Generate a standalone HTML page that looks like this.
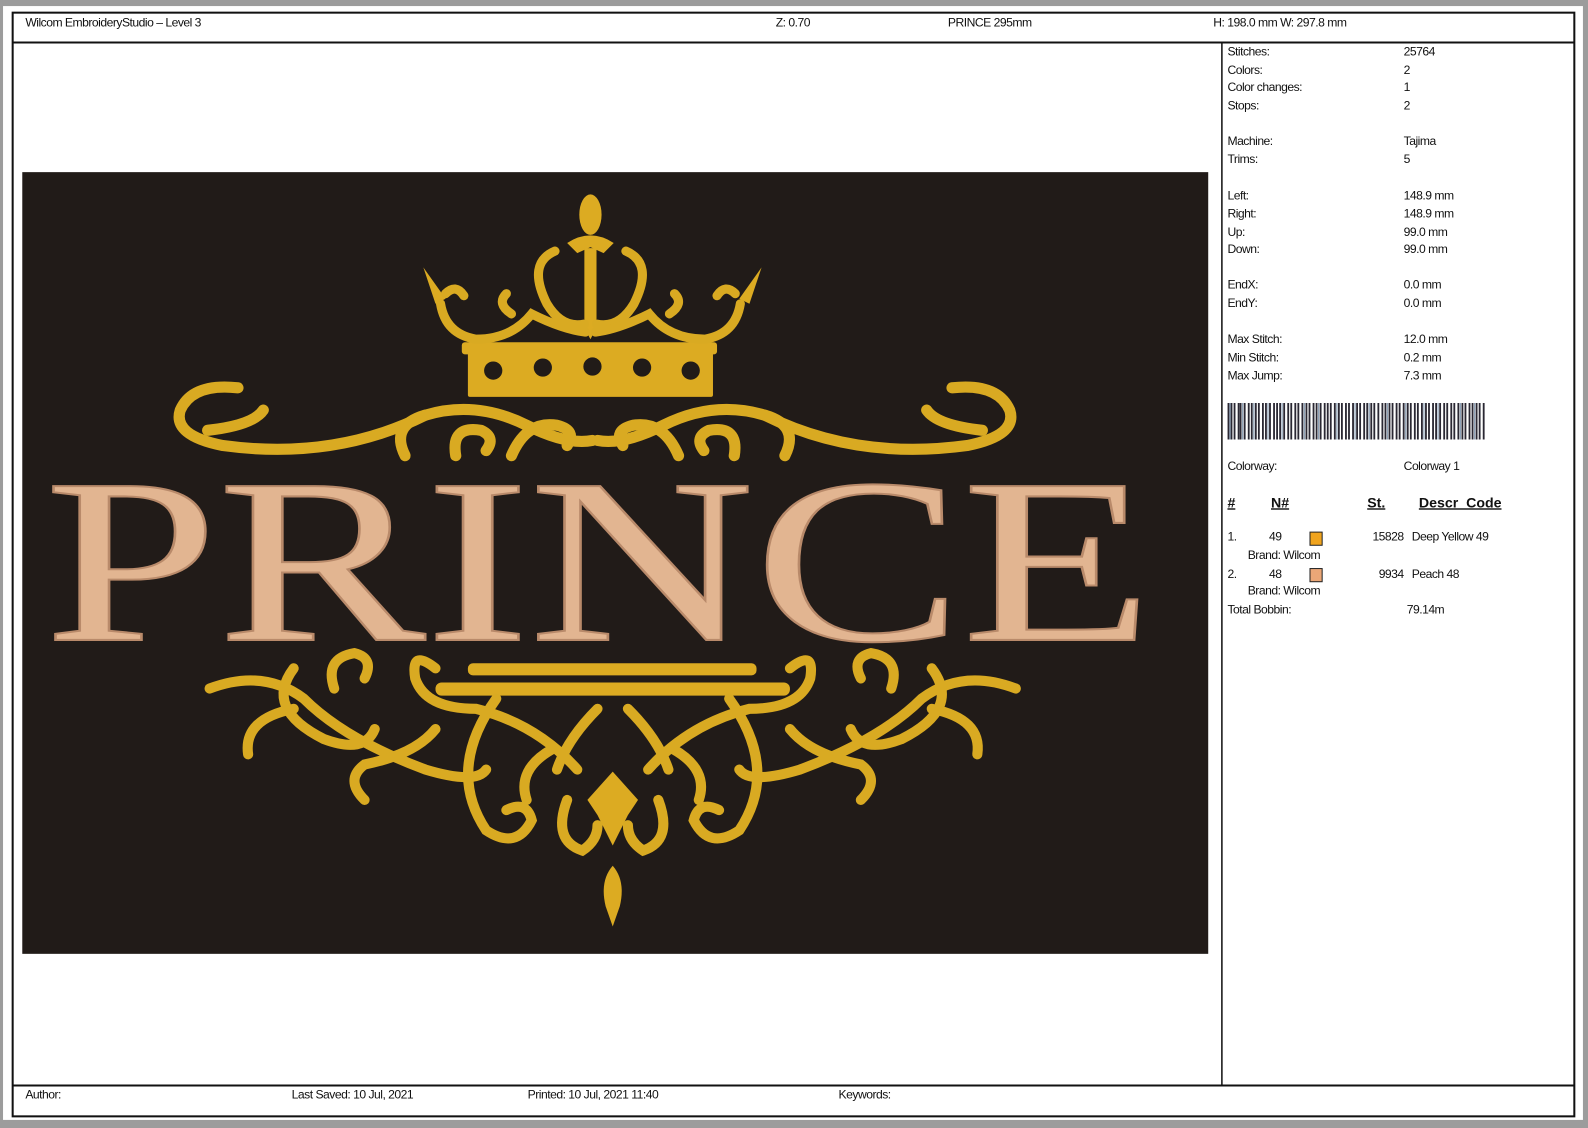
<!DOCTYPE html>
<html><head><meta charset="utf-8"><style>
html,body{margin:0;padding:0;background:#9c9c9c;}
svg{display:block}
.t{font-family:"Liberation Sans Narrow","Liberation Sans",sans-serif;font-size:12px;fill:#111;letter-spacing:-0.5px;}
.h{font-family:"Liberation Sans",sans-serif;font-size:14px;font-weight:bold;fill:#111;text-decoration:underline;}
.g{fill:none;stroke:#d9aa22;stroke-linecap:round;}
</style></head><body>
<svg width="1588" height="1128" viewBox="0 0 1568 1114" preserveAspectRatio="none" xmlns="http://www.w3.org/2000/svg">
<rect x="0" y="0" width="1568" height="1114" fill="#9c9c9c"/>
<rect x="3" y="6" width="1560" height="1100" fill="#fff"/>
<rect x="12.5" y="12.5" width="1542" height="1090" fill="none" stroke="#111" stroke-width="2"/>
<line x1="12" y1="42" x2="1555" y2="42" stroke="#111" stroke-width="2"/>
<line x1="12" y1="1072" x2="1555" y2="1072" stroke="#111" stroke-width="2"/>
<line x1="1206.5" y1="42" x2="1206.5" y2="1072" stroke="#111" stroke-width="1.5"/>
<text class="t" x="25" y="26">Wilcom EmbroideryStudio – Level 3</text>
<text class="t" x="766" y="26">Z: 0.70</text>
<text class="t" x="936" y="26">PRINCE 295mm</text>
<text class="t" x="1198" y="26">H: 198.0 mm   W: 297.8 mm</text>
<text class="t" x="25" y="1085">Author:</text>
<text class="t" x="288" y="1085">Last Saved: 10 Jul, 2021</text>
<text class="t" x="521" y="1085">Printed: 10 Jul, 2021 11:40</text>
<text class="t" x="828" y="1085">Keywords:</text>

<g class="t">
<text x="1212" y="55">Stitches:</text><text x="1386" y="55">25764</text>
<text x="1212" y="73">Colors:</text><text x="1386" y="73">2</text>
<text x="1212" y="90">Color changes:</text><text x="1386" y="90">1</text>
<text x="1212" y="108">Stops:</text><text x="1386" y="108">2</text>
<text x="1212" y="143">Machine:</text><text x="1386" y="143">Tajima</text>
<text x="1212" y="161">Trims:</text><text x="1386" y="161">5</text>
<text x="1212" y="197">Left:</text><text x="1386" y="197">148.9 mm</text>
<text x="1212" y="215">Right:</text><text x="1386" y="215">148.9 mm</text>
<text x="1212" y="233">Up:</text><text x="1386" y="233">99.0 mm</text>
<text x="1212" y="250">Down:</text><text x="1386" y="250">99.0 mm</text>
<text x="1212" y="285">EndX:</text><text x="1386" y="285">0.0 mm</text>
<text x="1212" y="303">EndY:</text><text x="1386" y="303">0.0 mm</text>
<text x="1212" y="339">Max Stitch:</text><text x="1386" y="339">12.0 mm</text>
<text x="1212" y="357">Min Stitch:</text><text x="1386" y="357">0.2 mm</text>
<text x="1212" y="375">Max Jump:</text><text x="1386" y="375">7.3 mm</text>
<text x="1212" y="464">Colorway:</text><text x="1386" y="464">Colorway 1</text>
<text x="1212" y="534">1.</text><text x="1253" y="534">49</text><text x="1386" y="534" text-anchor="end">15828</text><text x="1394" y="534">Deep Yellow 49</text>
<text x="1232" y="552">Brand: Wilcom</text>
<text x="1212" y="571">2.</text><text x="1253" y="571">48</text><text x="1386" y="571" text-anchor="end">9934</text><text x="1394" y="571">Peach 48</text>
<text x="1232" y="587">Brand: Wilcom</text>
<text x="1212" y="606">Total Bobbin:</text><text x="1389" y="606">79.14m</text>
</g>
<rect x="1293.5" y="525.5" width="12" height="13" fill="#f0a41e" stroke="#222"/>
<rect x="1293.5" y="561.5" width="12" height="13" fill="#eba777" stroke="#222"/>
<text class="h" x="1212" y="501">#</text>
<text class="h" x="1255" y="501">N#</text>
<text class="h" x="1350" y="501">St.</text>
<text class="h" x="1401" y="501">Descr_Code</text>
<g id="bc">
<rect x="1212" y="398" width="256" height="36" fill="#fff"/>
<path d="M1213 398v36M1216 398v36M1219 398v36M1223 398v36M1225 398v36M1229 398v36M1233 398v36M1236 398v36M1240 398v36M1243 398v36M1247 398v36M1250 398v36M1254 398v36M1258 398v36M1261 398v36M1264 398v36M1268 398v36M1272 398v36M1275 398v36M1279 398v36M1282 398v36M1286 398v36M1290 398v36M1293 398v36M1297 398v36M1300 398v36M1304 398v36M1308 398v36M1311 398v36M1314 398v36M1318 398v36M1322 398v36M1325 398v36M1329 398v36M1332 398v36M1336 398v36M1340 398v36M1343 398v36M1347 398v36M1350 398v36M1354 398v36M1357 398v36M1361 398v36M1365 398v36M1368 398v36M1372 398v36M1375 398v36M1379 398v36M1382 398v36M1386 398v36M1390 398v36M1393 398v36M1397 398v36M1400 398v36M1404 398v36M1408 398v36M1411 398v36M1415 398v36M1418 398v36M1422 398v36M1426 398v36M1429 398v36M1433 398v36M1436 398v36M1440 398v36M1444 398v36M1447 398v36M1451 398v36M1454 398v36M1458 398v36M1461 398v36M1465 398v36" stroke="#2a2833" stroke-width="1.8"/>
<path d="M1214.5 398v36M1227 398v36M1238 398v36M1252 398v36M1266 398v36M1288 398v36M1302 398v36M1320 398v36M1338 398v36M1352 398v36M1370 398v36M1388 398v36M1406 398v36M1420 398v36M1442 398v36M1456 398v36" stroke="#8fa3b8" stroke-width="1.2"/>
</g>

<rect x="22" y="170" width="1171" height="772" fill="#211b18"/>
<!-- crown -->
<g fill="#dcab22">
<rect x="456" y="338" width="252" height="12" rx="3"/>
<rect x="462" y="348" width="242" height="44" rx="2"/>
<ellipse cx="583" cy="212" rx="11" ry="20"/>
<path d="M560 240 Q583 225 606 240 L596 250 L583 244 L570 250Z"/>
<path d="M577 245h12v70h-12z"/>
<path d="M575 320 Q583 300 591 320 L583 335Z"/>
<path d="M418 264 L440 295 L430 300Z"/><path d="M752 264 L730 295 L740 300Z"/>
</g>
<g fill="#211b18"><circle cx="487" cy="366" r="9"/><circle cx="536" cy="363" r="9"/><circle cx="585" cy="362" r="9"/><circle cx="634" cy="363" r="9"/><circle cx="682" cy="366" r="9"/></g>
<g class="g" stroke-width="9">
<path d="M548 248 Q520 260 540 300 Q555 325 577 320"/>
<path d="M618 248 Q646 260 626 300 Q611 325 589 320"/>
<path d="M435 300 Q440 330 470 335 Q505 335 525 310 Q555 325 578 328"/>
<path d="M731 300 Q726 330 696 335 Q661 335 641 310 Q611 325 588 328"/>
<path d="M500 290 Q490 300 505 310"/><path d="M666 290 Q676 300 661 310"/>
<path d="M440 290 Q450 280 458 292"/><path d="M726 290 Q716 280 708 292"/>
</g>
<!-- upper scrolls -->
<g class="g" stroke-width="11">
<path d="M235 383 Q190 378 178 405 Q170 430 220 440 Q330 455 420 410 Q470 395 520 420 Q560 440 585 435"/>
<path d="M940 383 Q985 378 997 405 Q1005 430 955 440 Q845 455 755 410 Q705 395 655 420 Q615 440 590 435"/>
<path d="M205 425 Q250 420 260 405"/><path d="M970 425 Q925 420 915 405"/>
<path d="M400 450 Q385 420 420 410"/><path d="M775 450 Q790 420 755 410"/>
<path d="M450 450 Q445 420 475 425 Q490 432 480 445"/><path d="M725 450 Q730 420 700 425 Q685 432 695 445"/>
<path d="M505 450 Q520 415 550 420 Q570 425 560 440"/><path d="M670 450 Q655 415 625 420 Q605 425 615 440"/>
</g>
<!-- PRINCE -->
<text x="44" y="632" textLength="1094" lengthAdjust="spacingAndGlyphs" font-family="Liberation Serif,serif" font-size="232" fill="#e2b591" stroke="#b98a6a" stroke-width="2">PRINCE</text>
<!-- lower ornament -->
<g fill="#dcab22">
<rect x="462" y="655" width="285" height="12" rx="5"/>
<rect x="430" y="674" width="350" height="13" rx="6"/>
<path d="M605 762 L630 790 L620 805 L605 835 L590 805 L580 790Z"/>
<path d="M605 855 Q618 870 612 895 L605 915 L598 895 Q592 870 605 855Z"/>
</g>
<g class="g" stroke-width="10">
<path d="M207 680 Q260 660 300 690 Q340 730 420 760 Q470 775 480 760"/>
<path d="M1003 680 Q950 660 910 690 Q870 730 790 760 Q740 775 730 760"/>
<path d="M245 745 Q240 710 290 700"/><path d="M965 745 Q970 710 920 700"/>
<path d="M290 660 Q260 700 320 730 Q360 745 370 720"/><path d="M920 660 Q950 700 890 730 Q850 745 840 720"/>
<path d="M330 680 Q320 650 350 645 Q370 650 360 670"/><path d="M880 680 Q890 650 860 645 Q840 650 850 670"/>
<path d="M430 660 Q405 640 410 670 Q420 700 470 700 Q530 715 570 760"/><path d="M780 660 Q805 640 800 670 Q790 700 740 700 Q680 715 640 760"/>
<path d="M360 790 Q340 770 360 755 Q410 745 430 720"/><path d="M850 790 Q870 770 850 755 Q800 745 780 720"/>
<path d="M490 690 Q440 760 480 820 Q510 840 525 810 Q520 790 500 800"/>
<path d="M720 690 Q770 760 730 820 Q700 840 685 810 Q690 790 710 800"/>
<path d="M545 740 Q510 760 520 790"/><path d="M665 740 Q700 760 690 790"/>
<path d="M560 790 Q545 830 575 840 Q590 830 590 815"/><path d="M650 790 Q665 830 635 840 Q620 830 620 815"/>
<path d="M590 700 Q560 730 550 760"/><path d="M620 700 Q650 730 660 760"/>
</g>
</svg>
</body></html>
